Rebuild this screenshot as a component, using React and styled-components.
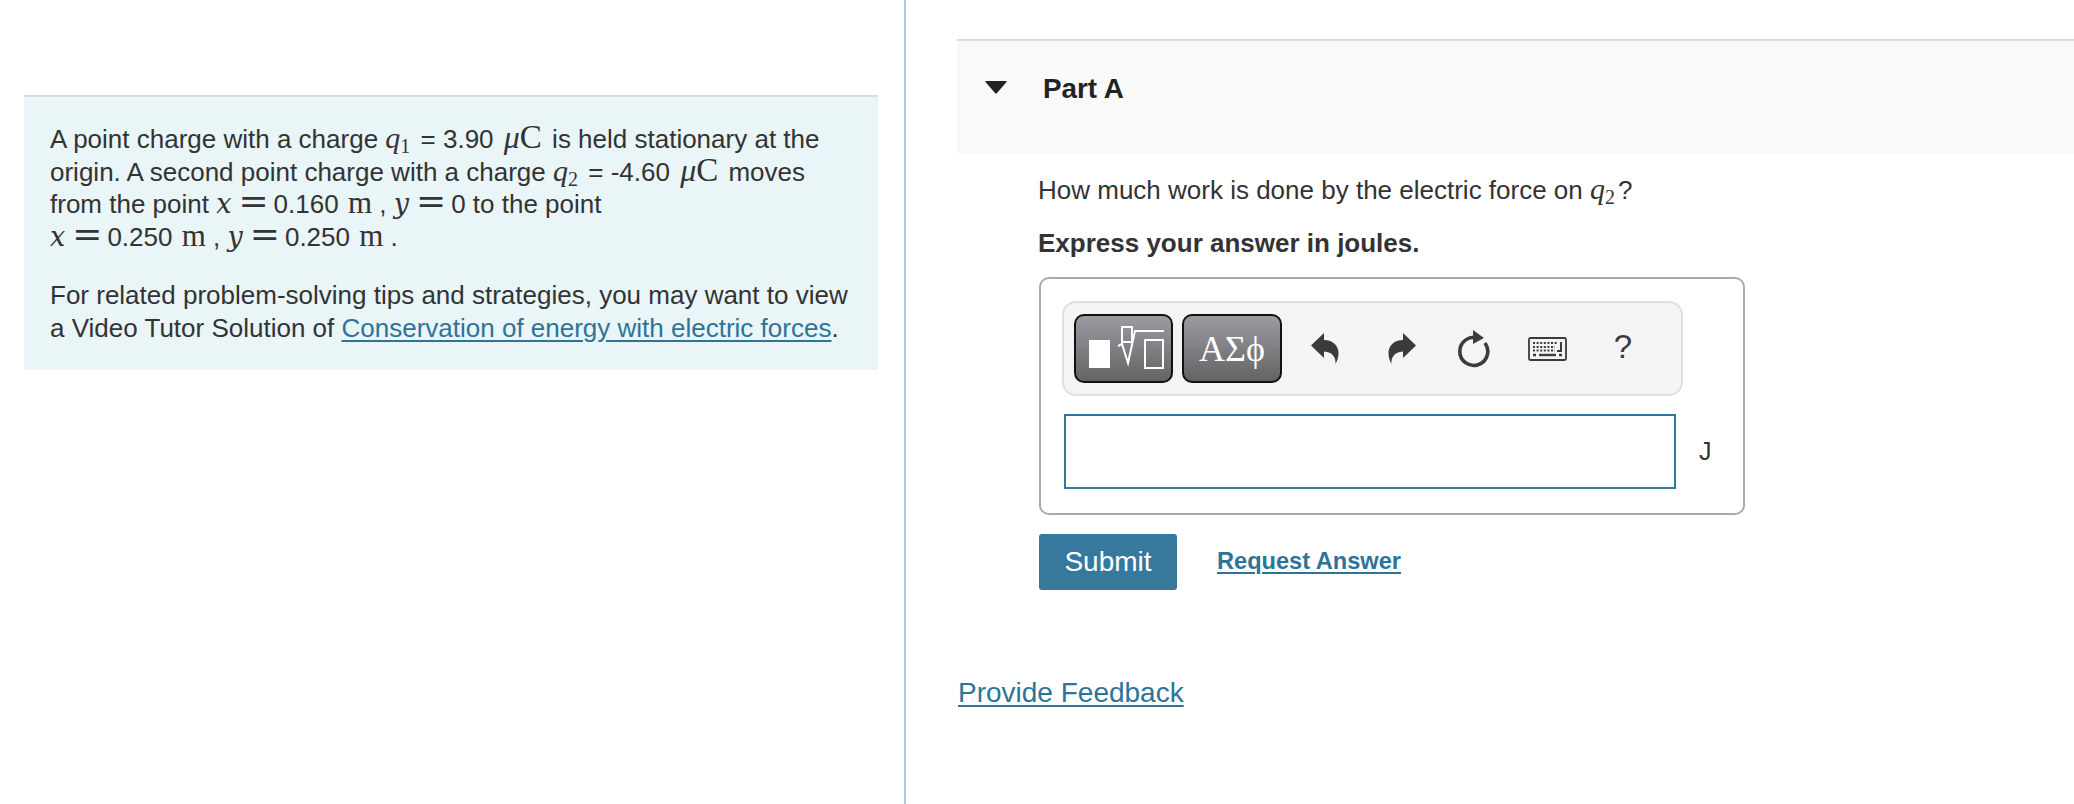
import React from 'react';
import styled, { createGlobalStyle } from 'styled-components';

const GlobalStyle = createGlobalStyle`
  html, body { margin: 0; padding: 0; background: #fff; overflow: hidden; }
  body { font-family: "Liberation Sans", Arial, sans-serif; color: #333; }
`;

const Page = styled.div`
  display: flex;
  width: 2074px;
  height: 804px;
`;

const LeftColumn = styled.div`
  box-sizing: border-box;
  width: 906px;
  height: 804px;
  padding: 95px 26px 0 24px;
  border-right: 2px solid #b5c4d1;
`;

const Intro = styled.div`
  box-sizing: border-box;
  height: 275px;
  padding: 26px 20px 0 26px;
  background: #e9f5f7;
  border-top: 2px solid #dcdcdc;
  font-size: 26px;
  line-height: 32.5px;
`;

const Paragraph = styled.p`
  margin: 0 0 26px;
  white-space: nowrap;
`;

const MathVar = styled.span`
  font-family: "Liberation Serif", serif;
  font-style: italic;
  font-size: 30px;
  line-height: 0;
`;

const MicroSign = styled(MathVar)`
  font-size: 32px;
  margin-left: 3px;
`;

const WideVar = styled.span`
  font-family: "DejaVu Serif", serif;
  font-style: italic;
  font-size: 27px;
  line-height: 0;
`;

const MathRoman = styled.span`
  font-family: "Liberation Serif", serif;
  font-size: 31px;
  line-height: 0;
  margin-left: 2px;
`;

const Coulomb = styled(MathRoman)`
  font-size: 33px;
  margin: 0 3px 0 0;
`;

const MathEquals = styled.span`
  font-family: "DejaVu Serif", serif;
  font-size: 36px;
  line-height: 0;
  margin: 0 5px 0 7px;
`;

const Sub = styled.sub`
  font-family: "Liberation Serif", serif;
  font-size: 20px;
  line-height: 0;
  vertical-align: -5px;
  margin-right: 3px;
`;

const TextLink = styled.a`
  color: #2d7498;
  text-decoration: underline;
  text-underline-offset: 3px;
  text-decoration-thickness: 2px;
`;

const RightColumn = styled.div`
  flex: 1;
  padding: 39px 0 0 51px;
`;

const PartHeader = styled.div`
  box-sizing: border-box;
  display: flex;
  gap: 37px;
  height: 115px;
  padding: 32px 0 0 28px;
  background: #f9f9f9;
  border-top: 2px solid #dcdcdc;
`;

const Caret = styled.svg`
  width: 22px;
  height: 13px;
  margin-top: 8px;
`;

const PartTitle = styled.h2`
  margin: 1px 0 0 -1px;
  font-size: 27.8px;
  line-height: 30px;
  font-weight: bold;
  color: #222;
`;

const PartBody = styled.div`
  padding: 16px 0 0 81px;
`;

const Question = styled.p`
  margin: 0;
  font-size: 26px;
  line-height: 40px;
  height: 40px;
`;

const Instruction = styled(Question)`
  margin-top: 13px;
  font-weight: bold;
`;

const AnswerBox = styled.div`
  box-sizing: border-box;
  width: 706px;
  height: 238px;
  margin: 14px 0 0 1px;
  padding: 22px 0 0 21px;
  border: 2px solid #aaa;
  border-radius: 10px;
`;

const Toolbar = styled.div`
  box-sizing: border-box;
  display: flex;
  align-items: center;
  width: 621px;
  height: 95px;
  padding: 0 0 0 10px;
  background: #f4f4f4;
  border: 2px solid #e0e0e0;
  border-radius: 14px;
`;

const PaletteButton = styled.div`
  box-sizing: border-box;
  display: flex;
  align-items: center;
  justify-content: center;
  width: ${p => p.$w}px;
  height: 69px;
  margin-right: 9px;
  background: linear-gradient(#9c9ba4, #636363);
  border: 2px solid #111;
  border-radius: 10px;
  color: #fff;
  font-family: "Liberation Serif", serif;
  font-size: 36px;
`;

const ToolIcon = styled.div`
  display: flex;
  align-items: center;
  justify-content: center;
  width: ${p => p.$w}px;
  color: #3b3b3b;
`;

const Help = styled(ToolIcon)`
  font-size: 33px;
  margin-top: -4px;
`;

const AnswerRow = styled.div`
  display: flex;
  align-items: center;
  gap: 23px;
  margin-top: 18px;
`;

const AnswerInput = styled.div`
  box-sizing: border-box;
  width: 612px;
  height: 75px;
  margin-left: 2px;
  border: 2px solid #35779a;
`;

const Unit = styled.span`
  font-size: 25px;
`;

const Actions = styled.div`
  display: flex;
  align-items: center;
  gap: 40px;
  margin: 19px 0 0 1px;
`;

const SubmitButton = styled.div`
  display: flex;
  align-items: center;
  justify-content: center;
  width: 138px;
  height: 56px;
  background: #37799c;
  border-radius: 3px;
  color: #fff;
  font-size: 28px;
`;

const RequestLink = styled(TextLink)`
  margin-bottom: 2px;
  font-size: 23.6px;
  font-weight: bold;
`;

const Feedback = styled(TextLink)`
  display: inline-block;
  margin: 85px 0 0 1px;
  font-size: 28px;
  line-height: 36px;
`;

const PaletteIcon = () => (
  <svg width="95" height="65" viewBox="0 0 95 65" fill="none" stroke="#fff" strokeWidth="2">
    <rect x="13" y="24" width="21" height="28" fill="#fff" stroke="none" />
    <rect x="46" y="11" width="10" height="15" />
    <path d="M42 30l4-2 6 19 7-32h29" />
    <rect x="69" y="24" width="18" height="28" />
  </svg>
);

const ReplyIcon = ({ flip }) => (
  <svg width="28" height="31" viewBox="0 0 28 31" style={flip ? { transform: 'scaleX(-1)' } : undefined}>
    <path fill="currentColor" d="M0 12.5 L13 0 V7 C22 7 28 13 27.5 21 C27.3 25 26 28 24.5 31 C25 25 22 19 13 18.5 V25 Z" />
  </svg>
);

const RefreshIcon = () => (
  <svg width="34" height="38" viewBox="0 0 34 38" fill="none">
    <path d="M21.5 8.2 A14 14 0 1 0 28 13" stroke="currentColor" strokeWidth="3.6" />
    <path d="M16 0 L27 8 L16 14 Z" fill="currentColor" />
  </svg>
);

const KeyboardIcon = () => (
  <svg width="39" height="24" viewBox="0 0 39 24" fill="none">
    <rect x="1" y="1" width="37" height="22" rx="1.5" stroke="currentColor" strokeWidth="1.8" />
    <path d="M5 6h25M5 10h22M5 13.5h22" stroke="currentColor" strokeWidth="2" strokeDasharray="2 1.6" />
    <path d="M33 5v9h-4" stroke="currentColor" strokeWidth="2" />
    <path d="M11 18h17" stroke="currentColor" strokeWidth="2.4" />
    <path d="M5 18h3M31 18h3" stroke="currentColor" strokeWidth="2.4" />
  </svg>
);

export default function App() {
  return (
    <Page>
      <GlobalStyle />
      <LeftColumn>
        <Intro>
          <Paragraph>
            A point charge with a charge <MathVar>q</MathVar><Sub>1</Sub> = 3.90 <MicroSign>μ</MicroSign><Coulomb>C</Coulomb> is held stationary at the
            <br />
            origin. A second point charge with a charge <MathVar>q</MathVar><Sub>2</Sub> = -4.60 <MicroSign>μ</MicroSign><Coulomb>C</Coulomb> moves
            <br />
            from the point <WideVar>x</WideVar><MathEquals>=</MathEquals>0.160 <MathRoman>m</MathRoman> , <WideVar>y</WideVar><MathEquals>=</MathEquals>0 to the point
            <br />
            <WideVar>x</WideVar><MathEquals>=</MathEquals>0.250 <MathRoman>m</MathRoman> , <WideVar>y</WideVar><MathEquals>=</MathEquals>0.250 <MathRoman>m</MathRoman> .
          </Paragraph>
          <Paragraph>
            For related problem-solving tips and strategies, you may want to view
            <br />
            a Video Tutor Solution of <TextLink>Conservation of energy with electric forces</TextLink>.
          </Paragraph>
        </Intro>
      </LeftColumn>
      <RightColumn>
        <PartHeader>
          <Caret viewBox="0 0 22 13"><path d="M1 0h20q1 0 .5 1L12 12q-1 1-2 0L.5 1Q0 0 1 0z" fill="#222" /></Caret>
          <PartTitle>Part A</PartTitle>
        </PartHeader>
        <PartBody>
          <Question>
            How much work is done by the electric force on <MathVar>q</MathVar><Sub>2</Sub>?
          </Question>
          <Instruction>Express your answer in joules.</Instruction>
          <AnswerBox>
            <Toolbar>
              <PaletteButton $w={99}><PaletteIcon /></PaletteButton>
              <PaletteButton $w={100}>ΑΣϕ</PaletteButton>
              <ToolIcon $w={68}><ReplyIcon /></ToolIcon>
              <ToolIcon $w={86}><ReplyIcon flip /></ToolIcon>
              <ToolIcon $w={58}><RefreshIcon /></ToolIcon>
              <ToolIcon $w={88}><KeyboardIcon /></ToolIcon>
              <Help $w={64}>?</Help>
            </Toolbar>
            <AnswerRow>
              <AnswerInput />
              <Unit>J</Unit>
            </AnswerRow>
          </AnswerBox>
          <Actions>
            <SubmitButton>Submit</SubmitButton>
            <RequestLink>Request Answer</RequestLink>
          </Actions>
        </PartBody>
        <Feedback>Provide Feedback</Feedback>
      </RightColumn>
    </Page>
  );
}
